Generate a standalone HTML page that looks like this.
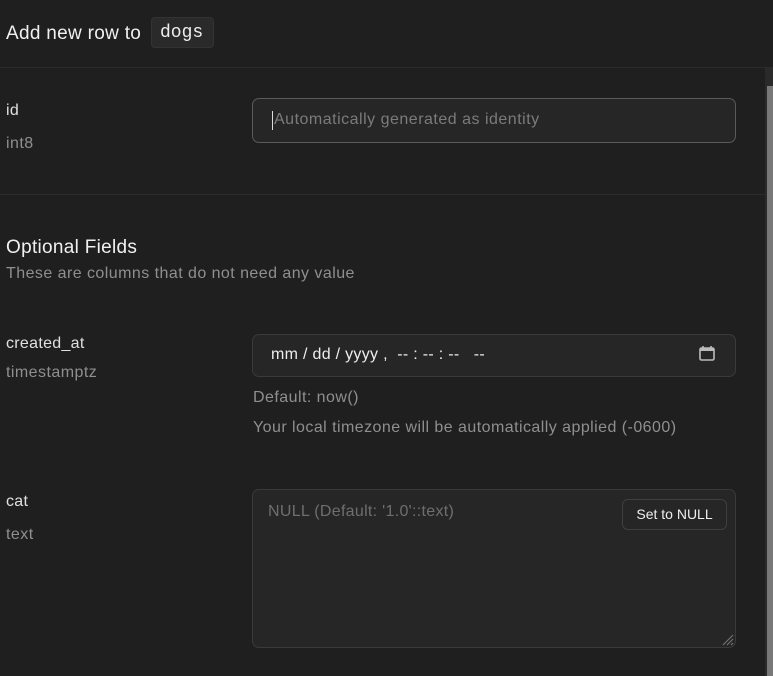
<!DOCTYPE html><html><head><style>
body{margin:0;width:773px;height:676px;overflow:hidden;background:#1f1f1f;font-family:"Liberation Sans",sans-serif;position:relative;color:#ededed}
.a{position:absolute}
.lbl{font-size:16px;color:#e0e0e0;letter-spacing:0.3px}
.sub{font-size:16px;color:#8f8f8f;letter-spacing:0.45px}
.box{position:absolute;background:#262626;border:1px solid #3a3a3a;border-radius:7px;box-sizing:border-box}
</style></head><body>
<div class="a" style="left:0;top:0;width:773px;height:67px;background:#1f1f1f;border-bottom:1px solid #2c2c2c"></div>
<div class="a" style="left:6px;top:23px;font-size:19px;letter-spacing:0.3px;color:#f0f0f0">Add new row to</div>
<div class="a" style="left:151px;top:17px;width:63px;height:31px;background:#2a2a2a;border:1px solid #333;border-radius:4px;box-sizing:border-box;font-family:'Liberation Mono',monospace;font-size:18px;color:#eee;padding:5px 0 0 8px">dogs</div>
<div class="a" style="left:765px;top:68px;width:8px;height:608px;background:#2a2a2a"></div>
<div class="a" style="left:767px;top:86px;width:6px;height:590px;background:#787878"></div>
<div class="a lbl" style="left:6px;top:102px">id</div>
<div class="a sub" style="left:6px;top:135px">int8</div>
<div class="box" style="left:252px;top:98px;width:484px;height:45px;border-color:#5a5a5a"></div>
<div class="a" style="left:272px;top:111px;width:1px;height:19px;background:#ddd"></div>
<div class="a" style="left:274px;top:111px;font-size:16px;letter-spacing:0.5px;color:#7b7b7b">Automatically generated as identity</div>
<div class="a" style="left:0;top:194px;width:765px;height:1px;background:#2c2c2c"></div>
<div class="a" style="left:6px;top:237px;font-size:19px;letter-spacing:0.3px;color:#f0f0f0">Optional Fields</div>
<div class="a sub" style="left:6px;top:265px">These are columns that do not need any value</div>
<div class="a lbl" style="left:6px;top:335px">created_at</div>
<div class="a sub" style="left:6px;top:364px">timestamptz</div>
<div class="box" style="left:252px;top:334px;width:484px;height:43px"></div>
<div class="a" style="left:271px;top:346px;font-size:16px;letter-spacing:0.3px;color:#eee">mm / dd / yyyy ,&nbsp; -- : -- : --&nbsp;&nbsp; --</div>
<svg class="a" style="left:698px;top:345px" width="18" height="17" viewBox="0 0 18 17"><rect x="2" y="3" width="14" height="12" rx="1.5" fill="none" stroke="#bbb" stroke-width="1.6"/><rect x="2" y="3" width="14" height="3" fill="#bbb"/><path d="M5 1v3M13 1v3" stroke="#bbb" stroke-width="1.6"/></svg>
<div class="a sub" style="left:253px;top:389px">Default: now()</div>
<div class="a sub" style="left:253px;top:419px">Your local timezone will be automatically applied (-0600)</div>
<div class="a lbl" style="left:6px;top:493px">cat</div>
<div class="a sub" style="left:6px;top:526px">text</div>
<div class="box" style="left:252px;top:489px;width:484px;height:159px"></div>
<div class="a" style="left:268px;top:503px;font-size:16px;letter-spacing:0.3px;color:#6e6e6e">NULL (Default: '1.0'::text)</div>
<div class="a" style="left:622px;top:499px;width:105px;height:31px;background:#262626;border:1px solid #3f3f3f;border-radius:6px;box-sizing:border-box;font-size:14px;color:#eee;text-align:center;line-height:29px">Set to NULL</div>
<svg class="a" style="left:721px;top:633px" width="13" height="13"><path d="M12 2L2 12M12 6L6 12M12 10L10 12" stroke="#777" stroke-width="1"/></svg>
</body></html>
